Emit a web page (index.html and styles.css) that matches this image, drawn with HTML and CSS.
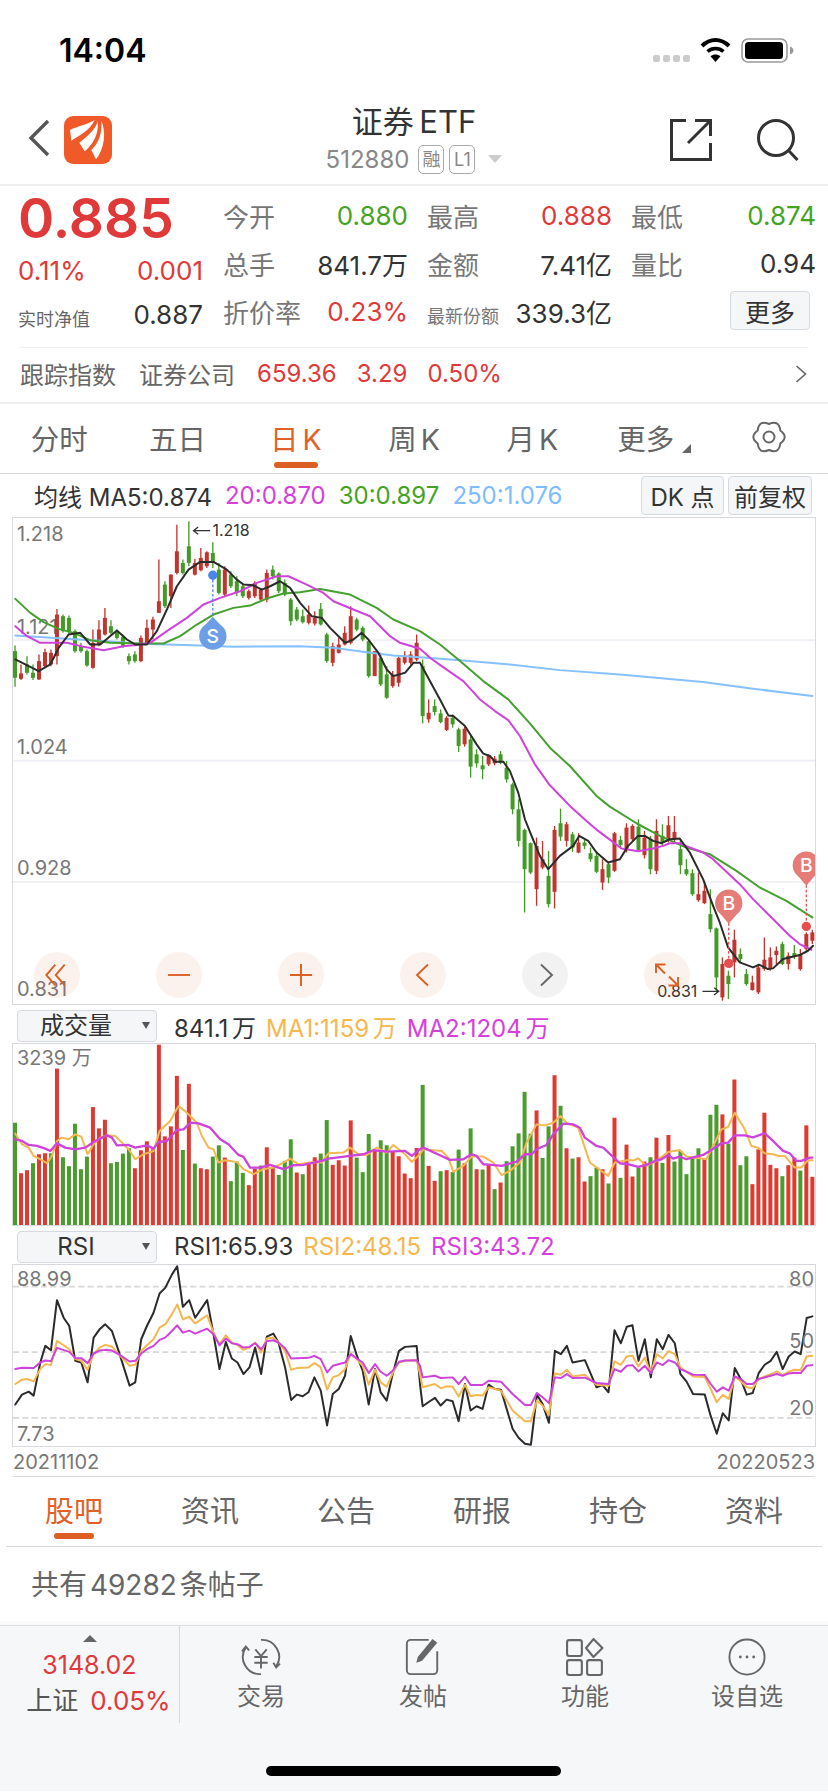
FILE: index.html
```html
<!DOCTYPE html>
<html lang="zh">
<head>
  <meta charset="UTF-8" />
  <meta name="viewport" content="width=device-width, initial-scale=1.0"/>
  <title>证券ETF</title>
  <link rel="stylesheet" href="styles.css">
</head>
<body>

<div class="status-bar">
  <span class="clock">14:04</span>
  <div class="status-icons">
    <div class="signal"><i></i><i></i><i></i><i></i></div>
    <svg class="wifi" viewBox="0 0 31 24">
      <path d="M2 8 C10 0 21 0 29 8" fill="none" stroke="#000" stroke-width="4"/>
      <path d="M7.5 13.5 C12 9.5 19 9.5 23.5 13.5" fill="none" stroke="#000" stroke-width="3.6"/>
      <path d="M15.5 24 L10.5 18.2 C13.5 15.8 17.5 15.8 20.5 18.2 Z" fill="#000"/>
    </svg>
    <svg class="battery" viewBox="0 0 54 25">
      <rect x="1" y="1" width="45" height="23" rx="6" fill="none" stroke="#999" stroke-width="1.6"/>
      <rect x="4" y="4" width="38" height="17" rx="3.5" fill="#000"/>
      <path d="M49 8.5 C51.5 9.5 52.5 11 52.5 12.5 C52.5 14 51.5 15.5 49 16.5 Z" fill="#999"/>
    </svg>
  </div>
</div>

<div class="nav">
  <div class="nav-left">
    <svg class="back" viewBox="0 0 22 38"><path d="M20 2 L3 19 L20 36" fill="none" stroke="#555" stroke-width="3.4"/></svg>
    <svg class="logo" viewBox="0 0 144 144">
      <rect width="144" height="144" rx="28" fill="#f05a28"/>
      <path d="M92 12 C70 26 42 30 18 42 L22 74 C46 58 76 46 92 12Z" fill="#fff"/>
      <path d="M101 14 C96 40 70 60 46 80 L62 106 C86 85 106 55 101 14Z" fill="#fff"/>
      <path d="M112 14 C115 50 105 80 82 102 L96 130 C120 100 128 50 112 14Z" fill="#fff"/>
    </svg>
  </div>
  <div class="nav-title">
    <h1>证券 ETF</h1>
    <div class="code-row">
      <span>512880</span>
      <em class="badge">融</em>
      <em class="badge">L1</em>
      <i class="code-arrow"></i>
    </div>
  </div>
  <div class="nav-right">
    <svg class="nav-icon" viewBox="0 0 42 42" fill="none" stroke="#333" stroke-width="3">
      <path d="M16 1.5 H1.5 V40.5 H40.5 V24"/>
      <path d="M25 1.5 H40.5 V17"/>
      <path d="M18 24 L39.5 2.5"/>
    </svg>
    <svg class="nav-icon" viewBox="0 0 42 42" fill="none" stroke="#333" stroke-width="3">
      <circle cx="19" cy="19" r="17.5"/>
      <path d="M32 32 L40.5 41"/>
    </svg>
  </div>
</div>

<div class="quote">
  <div class="quote-main">
    <div class="price red">0.885</div>
    <div class="change red"><span>0.11%</span><span>0.001</span></div>
    <div class="nav-value"><small>实时净值</small><span>0.887</span></div>
  </div>
  <div class="quote-grid">
    <div class="cell"><label>今开</label><span class="green">0.880</span></div>
    <div class="cell"><label>最高</label><span class="red">0.888</span></div>
    <div class="cell"><label>最低</label><span class="green">0.874</span></div>
    <div class="cell"><label>总手</label><span>841.7万</span></div>
    <div class="cell"><label>金额</label><span>7.41亿</span></div>
    <div class="cell"><label>量比</label><span>0.94</span></div>
    <div class="cell"><label>折价率</label><span class="red">0.23%</span></div>
    <div class="cell"><label class="small-label">最新份额</label><span>339.3亿</span></div>
    <div class="cell cell-end"><button class="more-btn">更多</button></div>
  </div>
</div>

<div class="index-row">
  <span class="index-title">跟踪指数</span>
  <span class="index-name">证券公司</span>
  <span class="red index-num">659.36</span>
  <span class="red index-num">3.29</span>
  <span class="red index-num">0.50%</span>
  <svg class="index-arrow" viewBox="0 0 12 18"><path d="M1.5 1 L10.5 9 L1.5 17" fill="none" stroke="#666" stroke-width="1.6"/></svg>
</div>

<div class="period-tabs">
  <a>分时</a>
  <a>五日</a>
  <a class="active">日 K</a>
  <a>周 K</a>
  <a>月 K</a>
  <a class="has-corner">更多<i class="corner"></i></a>
  <a>
    <svg class="gear" viewBox="0 0 34 32" fill="none" stroke="#666" stroke-width="2">
      <path d="M28.3 9.5 Q37 16 28.3 22.500 Q27 33.300 17 29 Q7 33.300 5.700 22.500 Q-3 16 5.700 9.500 Q7 -1.300 17 3 Q27 -1.300 28.3 9.5 Z" stroke-linejoin="round"/>
      <circle cx="17" cy="16" r="5.5"/>
    </svg>
  </a>
</div>

<div class="ma-row">
  <span class="ma-dark">均线 MA5:0.874</span>
  <span class="magenta">20:0.870</span>
  <span class="green">30:0.897</span>
  <span class="blue">250:1.076</span>
  <div class="ma-btns">
    <button class="flat-btn dk-btn">DK 点</button>
    <button class="flat-btn fq-btn">前复权</button>
  </div>
</div>

<div class="panel kline-panel">
  <svg class="panel-svg" viewBox="38 355 2408 1460" preserveAspectRatio="none">
    <g class="grid-lines">
      <line x1="38" x2="2446" y1="722" y2="722"/>
      <line x1="38" x2="2446" y1="1084" y2="1084"/>
      <line x1="38" x2="2446" y1="1448" y2="1448"/>
    </g>
    <text class="axis-text" x="50" y="424">1.218</text>
    <text class="axis-text" x="50" y="702">1.121</text>
    <text class="axis-text" x="50" y="1065">1.024</text>
    <text class="axis-text" x="50" y="1428">0.928</text>
    <text class="axis-text" x="50" y="1792">0.831</text>
    <g id="candles"></g>
    <g id="ma-lines"></g>

    <path d="M630 393 H582 M594 382 L580 393 L594 404" fill="none" stroke="#333" stroke-width="4"/>
    <text class="mark-text" x="637" y="410">1.218</text>
    <text class="mark-text" x="1972" y="1795">0.831</text>
    <path d="M2108 1777 H2155 M2143 1766 L2157 1777 L2143 1788" fill="none" stroke="#333" stroke-width="4"/>

    <line x1="638" x2="638" y1="541" y2="652" stroke="#4a86e8" stroke-width="4" stroke-dasharray="8 6"/>
    <circle cx="638" cy="527" r="14" fill="#4a86e8"/>
    <path d="M638 652 L606 686 H670 Z" fill="#6d9ee8"/>
    <circle cx="638" cy="710" r="41" fill="#6d9ee8"/>
    <text class="pin-text" x="638" y="730">S</text>

    <line x1="2187" x2="2187" y1="1572" y2="1680" stroke="#e5504f" stroke-width="4" stroke-dasharray="8 6"/>
    <circle cx="2187" cy="1693" r="14" fill="#e5504f"/>
    <path d="M2187 1574 L2155 1536 H2219 Z" fill="#e57c78"/>
    <circle cx="2187" cy="1512" r="41" fill="#e57c78"/>
    <text class="pin-text" x="2187" y="1532">B</text>

    <line x1="2420" x2="2420" y1="1458" y2="1570" stroke="#e5504f" stroke-width="4" stroke-dasharray="8 6"/>
    <circle cx="2420" cy="1582" r="14" fill="#e5504f"/>
    <path d="M2420 1460 L2388 1422 H2452 Z" fill="#e57c78"/>
    <circle cx="2420" cy="1398" r="41" fill="#e57c78"/>
    <text class="pin-text" x="2420" y="1418">B</text>
  </svg>
  <div class="chart-controls">
    <button class="ctrl">
      <svg viewBox="-12 -12 24 24"><path d="M-1.7 -10.3 L-10.7 0 L-1.7 10.3 M7.7 -10.3 L-1.3 0 L7.7 10.3"/></svg>
    </button>
    <button class="ctrl">
      <svg viewBox="-12 -12 24 24"><path d="M-11 0 H11"/></svg>
    </button>
    <button class="ctrl">
      <svg viewBox="-12 -12 24 24"><path d="M-11 0 H11 M0 -11 V11"/></svg>
    </button>
    <button class="ctrl">
      <svg viewBox="-12 -12 24 24"><path d="M5 -10.5 L-6 0 L5 10.5"/></svg>
    </button>
    <button class="ctrl ctrl-off">
      <svg viewBox="-12 -12 24 24"><path d="M-4 -10.5 L7 0 L-4 10.5"/></svg>
    </button>
    <button class="ctrl">
      <svg viewBox="-12 -12 24 24"><path d="M-11 -2 V-10.5 H-1.5 M-11 -10.5 L-2 -1.5 M11 2 V10.5 H1.5 M11 10.5 L2 1.5"/></svg>
    </button>
  </div>
</div>

<div class="indicator-head vol-head">
  <div class="select-box">成交量<i></i></div>
  <span class="ma-dark">841.1 万</span>
  <span class="orange">MA1:1159 万</span>
  <span class="magenta">MA2:1204 万</span>
</div>

<div class="panel sub-panel">
  <svg class="panel-svg" viewBox="38 133 2408 545" preserveAspectRatio="none">
    <g id="vol-bars"></g>
    <g id="vol-lines"></g>
    <text class="axis-text" x="50" y="195">3239 万</text>
  </svg>
</div>

<div class="indicator-head rsi-head">
  <div class="select-box">RSI<i></i></div>
  <span class="ma-dark">RSI1:65.93</span>
  <span class="orange">RSI2:48.15</span>
  <span class="magenta">RSI3:43.72</span>
</div>

<div class="panel sub-panel">
  <svg class="panel-svg" viewBox="38 136 2408 546" preserveAspectRatio="none">
    <g class="dash-lines">
      <line x1="38" x2="2446" y1="201" y2="201"/>
      <line x1="38" x2="2446" y1="399" y2="399"/>
      <line x1="38" x2="2446" y1="597" y2="597"/>
    </g>
    <g id="rsi-lines"></g>
    <text class="axis-text" x="50" y="198">88.99</text>
    <text class="axis-text" x="50" y="668">7.73</text>
    <text class="axis-text axis-end" x="2443" y="198">80</text>
    <text class="axis-text axis-end" x="2443" y="385">50</text>
    <text class="axis-text axis-end" x="2443" y="587">20</text>
  </svg>
</div>

<div class="date-row">
  <span>20211102</span>
  <span>20220523</span>
</div>

<div class="news-tabs">
  <a class="active">股吧</a>
  <a>资讯</a>
  <a>公告</a>
  <a>研报</a>
  <a>持仓</a>
  <a>资料</a>
</div>

<div class="post-count">共有 49282 条帖子</div>

<div class="bottom-bar">
  <div class="bottom-row">
    <div class="market">
      <i class="market-arrow"></i>
      <div class="market-num red">3148.02</div>
      <div class="market-name">上证<span class="red">0.05%</span></div>
    </div>
    <a class="tool">
      <svg viewBox="0 0 42 40" fill="none" stroke="#666" stroke-width="2">
        <path d="M21 2 A18 18 0 0 1 37 30"/>
        <path d="M34 26 L37 31 L41 27"/>
        <path d="M21 38 A18 18 0 0 1 5 10"/>
        <path d="M1 14 L5 9 L8.500 13"/>
        <path d="M15 12 L21 19 L27 12 M14 20 H28 M14 26 H28 M21 19 V32"/>
      </svg>
      <span>交易</span>
    </a>
    <a class="tool">
      <svg viewBox="0 0 40 40" fill="none" stroke="#666" stroke-width="2">
        <path d="M26 2 H7 A4 4 0 0 0 3 6 V34 A4 4 0 0 0 7 38 H31 A4 4 0 0 0 35 34 V14"/>
        <path d="M13 26 L14.500 20 L30 1 L35 5 L19 24 Z" fill="#666" stroke="none"/>
      </svg>
      <span>发帖</span>
    </a>
    <a class="tool">
      <svg viewBox="0 0 36 36" fill="none" stroke="#666" stroke-width="2">
        <rect x="1" y="2" width="14" height="15" rx="2"/>
        <path d="M26 1 L34.500 9.500 L26 18 L19 9.500 Z" stroke-linejoin="round"/>
        <rect x="1" y="21" width="14" height="14" rx="2"/>
        <rect x="20" y="21" width="14" height="14" rx="2"/>
      </svg>
      <span>功能</span>
    </a>
    <a class="tool">
      <svg viewBox="0 0 40 40" fill="none" stroke="#666" stroke-width="2">
        <circle cx="20" cy="20" r="18.500"/>
        <circle cx="13" cy="20" r="1.500" fill="#666" stroke="none"/>
        <circle cx="20" cy="20" r="1.500" fill="#666" stroke="none"/>
        <circle cx="27" cy="20" r="1.500" fill="#666" stroke="none"/>
      </svg>
      <span>设自选</span>
    </a>
  </div>
  <div class="home-bar"></div>
</div>

<script src="charts.js"></script>
</body>
</html>
```

FILE: styles.css
```css
* {
  box-sizing: border-box;
}

body {
  margin: 0;
  width: 828px;
  height: 1792px;
  overflow: hidden;
  background: #fff;
  color: #333;
  font-family: Inter, "Noto Sans CJK SC", sans-serif;
}

a {
  display: block;
}

button {
  font-family: inherit;
  padding: 0;
  cursor: pointer;
}

.red { color: #e0393a; }
.green { color: #45a322; }
.magenta { color: #d63fdc; }
.blue { color: #7cbcff; }
.orange { color: #f5b750; }

/* status bar */
.status-bar {
  height: 100px;
  display: flex;
  justify-content: space-between;
  align-items: center;
  padding: 0 33px 0 59px;
}

.clock {
  font-size: 32px;
  font-weight: 600;
  color: #000;
}

.status-icons {
  display: flex;
  align-items: flex-start;
  gap: 10px;
}

.signal {
  display: flex;
  gap: 3px;
  margin-top: 17px;
}

.signal i {
  width: 7px;
  height: 7px;
  border-radius: 2px;
  background: #ccc;
}

.wifi {
  width: 31px;
  height: 24px;
}

.battery {
  width: 54px;
  height: 25px;
}

/* nav */
.nav {
  height: 86px;
  border-bottom: 2px solid #eee;
  display: grid;
  grid-template-columns: 1fr auto 1fr;
}

.nav-left {
  display: flex;
  align-items: flex-start;
  padding: 16px 0 0 28px;
  gap: 14px;
}

.back {
  width: 22px;
  height: 38px;
  margin-top: 3px;
}

.logo {
  width: 48px;
  height: 48px;
}

.nav-title {
  text-align: center;
}

.nav-title h1 {
  margin: 6px 0 0;
  font-size: 31px;
  font-weight: 400;
  line-height: 32px;
  word-spacing: -3px;
  color: #333;
}

.code-row {
  display: flex;
  align-items: center;
  margin-top: 6px;
  color: #888;
  font-size: 24px;
  height: 30px;
}

.badge {
  font-style: normal;
  font-size: 18px;
  height: 29px;
  line-height: 27px;
  width: 26px;
  margin-left: 5px;
  text-align: center;
  border: 1px solid #aaa;
  border-radius: 5px;
}

.code-row span {
  margin-right: 4px;
}

.code-arrow {
  width: 0;
  height: 0;
  margin-left: 13px;
  border-left: 7px solid transparent;
  border-right: 7px solid transparent;
  border-top: 8px solid #ccc;
}

.nav-right {
  display: flex;
  justify-content: flex-end;
  align-items: flex-start;
  padding: 19px 29px 0 0;
  gap: 45px;
}

.nav-icon {
  width: 42px;
  height: 42px;
}

/* quote */
.quote {
  height: 161px;
  display: flex;
  padding: 0 12px 0 18px;
}

.quote-main {
  width: 185px;
  font-size: 26px;
}

.price {
  height: 62px;
  padding-top: 2px;
  font-size: 55px;
  line-height: 60px;
  font-weight: 600;
}

.change,
.nav-value {
  display: flex;
  justify-content: space-between;
  align-items: center;
  height: 44px;
}

.nav-value small {
  font-size: 18px;
  color: #666;
  margin-top: 8px;
}

.quote-grid {
  flex: 1;
  margin-left: 20px;
  padding-top: 5px;
  display: grid;
  grid-template-columns: repeat(3, 1fr);
  grid-auto-rows: 48px;
  column-gap: 19px;
  align-content: start;
}

.cell {
  display: flex;
  justify-content: space-between;
  align-items: center;
  font-size: 26px;
}

.cell label {
  color: #777;
}

.cell .small-label {
  font-size: 18px;
  margin-top: 8px;
}

.cell-end {
  justify-content: flex-end;
}

.more-btn {
  width: 80px;
  height: 39px;
  margin: -1px 6px 0 0;
  font-size: 25px;
  color: #333;
  background: #f5f6f8;
  border: 1px solid #d6dae0;
  border-radius: 4px;
}

/* index row */
.index-row {
  height: 55px;
  margin: 0 20px;
  padding-bottom: 3px;
  display: flex;
  align-items: center;
  border-top: 1px solid #eee;
  font-size: 24px;
  position: relative;
}

.index-title,
.index-name {
  color: #666;
}

.index-title {
  width: 119px;
}

.index-name {
  width: 118px;
}

.index-num {
  margin-right: 20px;
}

.index-arrow {
  width: 12px;
  height: 18px;
  margin-left: auto;
  margin-right: 1px;
}

/* period tabs */
.period-tabs {
  height: 72px;
  border-top: 2px solid #eee;
  border-bottom: 1px solid #d8d8d8;
  display: grid;
  grid-template-columns: repeat(7, 118.3px);
  align-items: center;
  justify-items: center;
  font-size: 28.5px;
  word-spacing: -4px;
  color: #666;
  padding-bottom: 3px;
}

.period-tabs a {
  position: relative;
}

.period-tabs .active {
  color: #e0622a;
}

.period-tabs .active::after {
  content: "";
  position: absolute;
  left: 4px;
  right: 4px;
  bottom: -10px;
  height: 6px;
  border-radius: 3px;
  background: #dc5f24;
}

.has-corner {
  margin-right: 10px;
}

.corner {
  position: absolute;
  right: -17px;
  bottom: 5px;
  width: 0;
  height: 0;
  border-left: 9px solid transparent;
  border-bottom: 9px solid #666;
}

.gear {
  display: block;
  width: 34px;
  height: 32px;
}

/* ma row */
.ma-row {
  height: 43px;
  display: flex;
  align-items: center;
  padding-left: 34px;
  font-size: 24px;
  gap: 13px;
}

.ma-dark {
  color: #333;
}

.ma-btns {
  margin-left: auto;
  margin-right: 16px;
  display: flex;
  gap: 4px;
}

.flat-btn {
  height: 39px;
  font-size: 24px;
  color: #333;
  background: #f5f6f8;
  border: 1px solid #d6dae0;
  border-radius: 4px;
}

.dk-btn {
  width: 83px;
}

.fq-btn {
  width: 84px;
}

/* chart panels */
.panel {
  margin-left: 12px;
  width: 804px;
  border: 1px solid #d8d8de;
  position: relative;
}

.kline-panel {
  height: 488px;
}

.sub-panel {
  height: 183px;
}

.panel-svg {
  display: block;
  width: 100%;
  height: 100%;
}

.grid-lines line {
  stroke: #eeeef4;
  stroke-width: 5;
}

.dash-lines line {
  stroke: #d8d8d8;
  stroke-width: 5;
  stroke-dasharray: 18 10;
}

.axis-text {
  font-size: 60px;
  fill: #777;
}

.axis-end {
  text-anchor: end;
}

.mark-text {
  font-size: 48px;
  fill: #333;
}

.pin-text {
  font-size: 58px;
  font-weight: 500;
  fill: #fff;
  text-anchor: middle;
}

.chart-controls {
  position: absolute;
  left: 21px;
  bottom: 6px;
  display: flex;
  gap: 76px;
}

.ctrl {
  width: 46px;
  height: 46px;
  border: none;
  border-radius: 50%;
  background: rgba(226, 110, 50, 0.09);
}

.ctrl svg {
  display: block;
  width: 24px;
  height: 24px;
  margin: 0 auto;
  fill: none;
  stroke: #dc5f24;
  stroke-width: 1.9;
}

.ctrl-off {
  background: rgba(0, 0, 0, 0.05);
}

.ctrl-off svg {
  stroke: #666;
}

/* indicator headers */
.indicator-head {
  display: flex;
  align-items: center;
  font-size: 24px;
  padding-left: 5px;
  margin-left: 12px;
  gap: 10px;
  word-spacing: -3px;
}

.vol-head {
  height: 38px;
  padding-top: 4px;
}

.rsi-head {
  height: 38px;
  padding-top: 3px;
}

.select-box {
  width: 140px;
  height: 32px;
  line-height: 30px;
  margin-right: 7px;
  padding-right: 22px;
  text-align: center;
  color: #333;
  background: #f5f6f8;
  border: 1px solid #d6dae0;
  border-radius: 4px;
  position: relative;
}

.select-box i {
  position: absolute;
  right: 6px;
  top: 11px;
  width: 0;
  height: 0;
  border-left: 4px solid transparent;
  border-right: 4px solid transparent;
  border-top: 7px solid #555;
}

/* dates */
.date-row {
  height: 30px;
  margin: 0 13px;
  display: flex;
  justify-content: space-between;
  align-items: center;
  font-size: 20px;
  color: #777;
  border-bottom: 1px solid #d8d8d8;
}

/* news tabs */
.news-tabs {
  height: 70px;
  margin: 0 6px;
  border-bottom: 1px solid #d8d8d8;
  display: grid;
  grid-template-columns: repeat(6, 136px);
  justify-items: center;
  align-items: center;
  font-size: 29px;
  color: #666;
  padding-bottom: 6px;
}

.news-tabs .active {
  color: #e0622a;
  position: relative;
}

.news-tabs .active::after {
  content: "";
  position: absolute;
  left: 9px;
  right: 9px;
  bottom: -9px;
  height: 6px;
  border-radius: 3px;
  background: #dc5f24;
}

.post-count {
  height: 74px;
  padding: 0 0 2px 31px;
  display: flex;
  align-items: center;
  font-size: 28px;
  word-spacing: -5px;
  color: #666;
}

/* bottom bar */
.bottom-bar {
  height: 170px;
  padding-top: 4px;
  background: #fbfbfc;
}

.bottom-row {
  display: flex;
  height: 166px;
  background: #f6f7f9;
  border-top: 1px solid #ddd;
  position: relative;
}

.market {
  width: 180px;
  height: 97px;
  border-right: 1px solid #d8d8d8;
  text-align: center;
  padding-top: 9px;
  flex-shrink: 0;
}

.market-arrow {
  display: block;
  width: 0;
  height: 0;
  margin: 0 auto;
  border-left: 7px solid transparent;
  border-right: 7px solid transparent;
  border-bottom: 7px solid #666;
}

.market-num {
  font-size: 25px;
  line-height: 30px;
  margin-top: 8px;
}

.market-name {
  font-size: 26px;
  line-height: 34px;
  color: #555;
  margin-top: 4px;
  padding-left: 18px;
  white-space: nowrap;
}

.market-name span {
  margin-left: 12px;
}

.tool {
  width: 162px;
  padding-top: 12px;
  text-align: center;
  font-size: 24px;
  color: #666;
}

.tool svg {
  display: block;
  width: 40px;
  height: 38px;
  margin: 0 auto;
}

.tool span {
  display: block;
  margin-top: 4px;
  line-height: 34px;
}

.home-bar {
  position: absolute;
  left: 266px;
  top: 1766px;
  width: 295px;
  height: 10px;
  border-radius: 5px;
  background: #000;
}
```

FILE: charts.js
```js
// all chart coordinates are in 3x page units, same as the svg viewBoxes
const NS = 'http://www.w3.org/2000/svg';

function add(parent, tag, attrs) {
  const el = document.createElementNS(NS, tag);
  for (const k in attrs) el.setAttribute(k, attrs[k]);
  parent.appendChild(el);
  return el;
}

function line(parent, pts, color, width) {
  const str = [];
  for (let i = 0; i < pts.length; i += 2) str.push(pts[i] + ',' + pts[i + 1]);
  add(parent, 'polyline', {
    points: str.join(' '), fill: 'none', stroke: color,
    'stroke-width': width, 'stroke-linejoin': 'round', 'stroke-linecap': 'round'
  });
}

// shift the right half of a series over by dx, dy
function shift(pts, dx, dy) {
  return pts.map((v, i) => v + (i % 2 ? dy : dx));
}

// [color, high, bodyTop, bodyBottom, low]
const candlesLeft = [
  ['g',738,755,835,862],['r',795,822,838,842],['g',770,795,820,825],['g',795,820,835,842],
  ['r',765,785,840,842],['r',748,758,800,805],['r',750,760,795,800],['r',628,645,770,795],
  ['g',645,650,695,700],['g',648,655,695,705],['g',690,695,755,760],['g',730,740,755,760],
  ['g',750,755,798,802],['r',690,730,805,808],['r',662,690,735,740],['r',625,655,705,708],
  ['g',662,680,700,705],['g',690,695,715,720],['g',705,712,740,745],['g',762,770,785,795],
  ['g',755,765,785,790],['r',708,715,785,788],['r',660,685,730,735],['r',652,660,690,720],
  ['r',480,605,640,640],['g',545,555,620,625],['r',525,525,590,625],['r',375,455,520,525],
  ['g',480,490,520,525],['g',365,440,490,500],['r',478,490,525,528],['r',445,475,512,515],
  ['r',455,458,500,505],['g',428,460,490,505],['g',490,510,580,585],['r',500,510,585,590],
  ['g',515,525,560,565],['g',530,545,580,590],['g',555,560,590,595],['r',570,575,595,600],
  ['r',545,550,590,595],['r',565,570,600,603],['r',510,520,600,608],['g',498,510,530,540],
  ['g',518,522,575,580],['g',540,550,585,590],['g',595,600,665,678],['g',622,630,660,665],
  ['g',630,650,668,672],['r',618,645,670,675],['r',635,655,672,678],['g',610,628,675,678],
  ['g',700,705,785,790],['r',730,740,790,800],['r',715,735,760,762],['r',680,700,735,738],
  ['r',620,650,730,735],['g',655,660,690,695],['g',680,685,720,725],['g',720,725,830,835],
  ['r',755,755,830,830],['g',760,775,855,860],['g',800,825,895,898],['r',815,825,860,865],
  ['r',772,775,850,862],['r',755,768,790,795],['r',755,765,790,795],['r',705,730,780,785]
];

// these were read off the lower half, y is 900 lower than the ones above
const candlesRight = [
  ['g',-120,-100,50,72],['r',0,40,60,70],['g',0,20,38,48],['g',30,42,68,72],
  ['r',50,55,92,95],['g',45,55,75,85],['g',85,90,140,158],['r',82,88,135,142],
  ['g',110,120,202,235],['g',150,165,192,205],['g',170,198,210,240],['r',165,170,195,200],
  ['r',170,178,192,198],['g',155,165,190,195],['g',185,205,240,250],['g',250,255,330,345],
  ['g',300,330,425,442],['g',388,392,510,640],['g',430,432,520,525],['r',415,440,570,620],
  ['r',425,480,505,510],['g',455,530,615,625],['r',380,392,578,628],['g',328,372,412,425],
  ['r',368,375,425,442],['g',398,405,445,458],['r',402,430,460,462],['g',420,430,440,450],
  ['g',445,462,480,488],['g',455,470,518,522],['r',480,510,550,572],['g',490,495,535,552],
  ['r',398,402,515,518],['g',410,422,438,445],['r',372,385,448,460],['r',375,380,420,425],
  ['g',360,382,452,458],['r',395,415,468,478],['g',410,420,510,525],['r',360,395,515,525],
  ['g',375,410,430,440],['r',350,378,420,430],['r',350,398,420,430],['g',420,450,498,525],
  ['g',480,510,525,530],['g',510,522,585,590],['r',520,585,603,608],['r',545,575,612,615],
  ['g',570,645,690,700],['g',685,688,835,875],['r',775,795,895,905],['g',815,830,855,900],
  ['r',692,722,790,835],['g',748,765,780,790],['g',810,825,855,860],['r',830,850,873,875],
  ['r',795,805,880,885],['r',715,782,810,815],['r',745,775,810,815],['r',742,755,768,795],
  ['g',728,735,795,798],['r',760,770,795,812],['g',738,762,772,780],['r',750,768,810,815],
  ['r',700,705,750,755],['r',692,700,725,735]
];

const candleBox = document.getElementById('candles');
const candleColor = { r: '#c2352f', g: '#429b27' };
candlesLeft.concat(candlesRight.map(c => [c[0], c[1] + 900, c[2] + 900, c[3] + 900, c[4] + 900]))
  .forEach((c, i) => {
    const x = 44 + 18 * i;
    add(candleBox, 'line', { x1: x, x2: x, y1: c[1], y2: c[4], stroke: candleColor[c[0]], 'stroke-width': 4 });
    add(candleBox, 'rect', { x: x - 6, y: c[2], width: 12, height: c[3] - c[2], fill: candleColor[c[0]] });
  });

const ma5 = [45,780,75,795,115,815,150,795,175,745,205,705,240,700,270,735,300,735,350,693,380,720,405,735,440,735,470,695,500,630,530,560,565,510,600,487,640,487,680,510,710,540,730,555,760,557,785,570,810,560,840,545,870,565,900,610,935,650,965,655,990,685,1035,730,1060,720,1085,700,1105,720,1135,760,1160,810,1180,830,1215,820,1240,790,1260,790]
  .concat(shift([60,0,85,48,100,50,135,80,170,135,190,163,210,170,225,187,250,187,270,215,295,280,315,360,335,410,360,470,385,510,420,470,460,440,478,410,505,425,530,460,565,490,600,480,625,440,655,410,675,410,700,425,725,432,750,420,780,418,810,460,850,540,880,620,900,670,925,745,960,790,1000,805,1018,797,1045,810,1060,808,1090,780,1140,768,1165,755,1180,740], 1260, 900));

const ma20 = [45,680,80,710,120,730,200,730,250,742,310,752,370,740,420,735,450,730,500,695,560,655,610,615,660,595,720,575,770,550,830,530,865,530,920,555,970,580,1000,605,1060,630,1110,650,1170,710,1200,730,1260,748,1290,775,1325,800,1390,845,1440,900]
  .concat(shift([225,35,265,62,300,110,345,195,390,258,455,325,500,365,535,395,575,425,605,448,655,456,700,448,730,440,750,432,780,432,810,445,850,460,880,480,960,555,1000,600,1050,650,1110,710,1140,735,1175,752], 1260, 900));

const ma30 = [45,598,90,640,130,668,175,688,220,700,270,722,330,730,420,732,490,732,540,710,590,675,640,645,700,625,750,618,800,597,850,582,900,578,960,568,1050,585,1130,625,1180,660,1260,695,1320,735,1375,780,1450,845,1525,900]
  .concat(shift([330,72,390,145,450,200,530,290,570,322,650,372,720,410,800,445,870,465,950,515,1020,565,1100,605,1178,655], 1260, 900));

const ma250 = [45,708,200,718,320,725,420,733,500,735,600,738,700,742,900,740,1000,745,1100,758,1180,768,1260,773,1390,783,1530,795,1680,812,1860,825,2110,848,2260,868,2438,890];

const maBox = document.getElementById('ma-lines');
line(maBox, ma250, '#85c1ff', 6);
line(maBox, ma30, '#45a030', 6);
line(maBox, ma20, '#cf42dc', 6);
line(maBox, ma5, '#2b2b2b', 6);

// volume: tops of the bars, 134 of them
const volTop = [370,522,513,492,465,462,462,207,474,501,373,510,472,323,387,361,492,488,463,447,507,453,426,450,135,411,381,229,452,253,493,507,510,472,438,475,546,487,521,558,508,499,444,505,527,485,420,520,525,493,474,463,362,497,483,499,363,475,519,404,453,423,438,458,471,523,537,446,
  256,500,545,516,513,518,451,492,387,510,511,495,570,550,486,441,402,277,403,333,476,381,227,319,447,478,474,547,531,505,510,553,355,536,436,532,505,487,474,415,491,407,487,455,525,475,447,477,346,316,345,433,240,498,471,555,450,340,497,507,531,498,475,514,378,533];
const volColors = [
  'g','r','r','g','r','r','g','r','g','g','g','g','g','r','r','r','g','g','g','g','r','r','r','r','r','r','r','r','g','r',
  'g','r','r','g','g','r','g','g','g','r','r','g','r','r','g','g','g','r','g','r','r','g','g','r','r','r','r','g','g','g',
  'r','g','g','r','r','r','r','r',
  'g','r','r','g','r','g','g','r','g','r','g','r','g','r','g','g','g','g','g','r','g','g','r','g','r','g','r','r','g','g',
  'r','g','r','g','r','r','g','r','g','r','g','r','g','g','g','g','g','r','g','g','r','g','r','g','g','r','r','r','r','r',
  'g','r','r','g','r','r'
];
const volBox = document.getElementById('vol-bars');
const volColor = { r: '#e0392f', g: '#4a9c2d' };
volTop.forEach((top, i) => {
  add(volBox, 'rect', { x: 38 + 18 * i, y: top, width: 12, height: 678 - top, fill: volColor[volColors[i]] });
});

const volMa1 = [45,403,65,435,85,445,100,470,120,480,140,492,155,470,170,425,185,415,205,420,225,405,243,412,262,465,280,435,300,415,320,408,345,410,365,430,385,450,405,480,430,465,460,455,478,395,510,365,535,320,555,335,590,370,605,410,625,445,640,450,655,490,675,483,710,488,730,510,760,525,790,510,820,505,850,490,870,478,895,495,940,488,965,490,985,462,1030,460,1050,445,1075,465,1100,468,1130,445,1160,460,1180,437,1215,465,1235,488,1260,465]
  .concat(shift([10,450,65,455,85,475,100,518,130,500,155,472,190,472,220,490,245,528,270,515,300,490,320,430,350,375,375,378,400,370,422,350,440,370,475,385,510,490,565,530,585,490,625,482,640,484,655,477,680,500,710,485,745,458,780,452,800,472,860,480,880,440,905,390,925,383,945,340,975,390,995,440,1015,445,1035,462,1060,465,1075,470,1095,470,1125,505,1145,505,1165,483,1178,483], 1260, 0));

const volMa2 = [45,420,65,425,85,437,110,440,135,448,150,455,170,432,195,445,225,450,255,445,280,428,320,408,335,415,350,438,385,437,405,445,440,438,460,448,475,428,500,425,530,392,550,390,570,370,595,372,630,385,660,420,685,435,715,467,730,473,750,505,780,505,810,497,850,510,880,498,910,497,965,485,985,478,1050,470,1090,465,1120,453,1160,457,1215,455,1235,470,1260,450]
  .concat(shift([10,445,60,468,90,482,130,480,155,465,170,470,190,495,215,497,245,500,290,487,315,465,335,465,350,450,380,437,400,405,430,373,460,375,480,385,495,415,530,440,550,445,600,492,625,495,655,503,680,497,710,483,725,480,745,467,760,478,780,472,800,480,850,467,870,455,905,432,925,430,945,408,975,408,1000,414,1035,402,1060,425,1090,455,1110,462,1130,485,1145,485,1170,475,1178,475], 1260, 0));

const volLines = document.getElementById('vol-lines');
line(volLines, volMa1, '#f5b750', 6);
line(volLines, volMa2, '#cf42dc', 7);

// rsi
const rsi1 = [45,557,65,527,85,518,100,530,120,430,135,380,152,393,170,242,190,295,207,320,225,425,243,430,262,490,280,355,298,330,315,315,335,335,355,395,388,500,405,490,423,360,440,320,460,280,478,222,495,205,515,165,531,140,548,262,567,242,585,295,621,242,640,345,658,450,677,368,695,418,712,430,730,465,748,445,765,385,783,465,800,352,820,343,835,370,855,445,873,543,890,527,908,532,925,520,943,475,962,515,981,620,998,525,1016,510,1035,470,1052,350,1070,408,1088,455,1106,557,1125,450,1142,520,1160,545,1178,465,1197,395,1215,383,1250,380,1260,495]
  .concat(shift([8,562,25,550,45,537,62,560,80,542,98,547,116,607,135,495,152,575,170,562,188,570,206,497,225,510,243,512,278,630,296,657,315,675,333,678,351,527,368,555,387,612,405,395,423,405,441,380,458,430,495,423,530,505,548,498,566,520,584,333,603,372,621,322,638,318,656,425,675,360,693,475,711,360,729,390,746,347,765,372,782,465,800,487,820,525,855,527,873,592,891,645,909,583,927,605,945,447,963,480,981,527,999,522,1017,462,1035,437,1053,425,1071,398,1089,450,1107,412,1125,397,1143,405,1161,296,1178,291], 1260, 0));

const rsi2 = [45,495,65,482,80,480,100,487,120,450,135,435,152,438,170,365,190,378,207,390,225,420,243,425,262,452,280,405,298,385,315,377,335,382,355,405,388,440,405,437,423,395,440,378,460,360,478,325,495,315,515,285,531,255,548,300,567,292,585,312,621,288,640,340,658,375,677,348,695,370,712,378,730,392,748,385,765,370,783,400,800,358,820,355,835,370,855,395,873,452,890,447,925,445,943,432,962,445,981,512,998,475,1016,468,1035,450,1052,403,1070,420,1088,440,1106,497,1125,452,1142,490,1160,503,1178,462,1197,430,1215,425,1250,423,1260,465]
  .concat(shift([8,505,45,495,62,508,80,502,98,503,116,533,135,497,152,532,170,528,188,530,206,505,243,515,278,575,315,607,333,607,351,545,368,560,387,588,405,463,423,467,441,452,458,472,495,467,530,497,566,500,584,427,603,437,621,412,638,410,656,442,675,415,693,462,711,405,729,418,746,396,765,405,782,445,820,472,855,474,873,510,891,550,909,528,927,540,945,472,963,487,981,505,999,508,1017,480,1053,465,1071,457,1089,468,1107,458,1125,452,1143,453,1161,412,1178,410], 1260, 0));

const rsi3 = [45,450,65,446,100,447,120,430,135,424,152,426,170,386,207,398,225,417,243,417,262,432,280,403,298,394,315,392,335,394,355,405,388,427,405,425,423,403,440,390,460,380,478,362,495,355,515,335,531,318,548,340,567,334,585,343,621,328,640,345,658,378,677,358,695,372,712,375,730,385,748,383,765,372,783,390,800,366,820,363,835,370,855,387,873,418,925,416,943,410,962,420,981,460,998,440,1035,430,1052,405,1070,418,1088,430,1106,462,1125,435,1142,458,1160,470,1178,455,1197,428,1215,424,1250,423,1260,440]
  .concat(shift([8,475,45,470,62,477,98,475,116,495,135,473,152,498,188,498,206,485,243,488,278,525,315,558,333,558,351,522,368,535,387,552,405,475,423,477,441,465,458,477,495,476,530,492,566,495,584,450,603,458,621,440,638,438,656,457,675,440,693,462,711,430,729,438,746,423,765,430,782,450,820,467,855,468,873,495,891,518,909,505,927,515,945,472,963,480,981,495,999,495,1017,480,1053,470,1071,465,1089,470,1107,463,1125,461,1143,462,1161,440,1178,438], 1260, 0));

const rsiBox = document.getElementById('rsi-lines');
line(rsiBox, rsi1, '#2b2b2b', 6);
line(rsiBox, rsi2, '#f5b750', 6);
line(rsiBox, rsi3, '#cf42dc', 6);
```
